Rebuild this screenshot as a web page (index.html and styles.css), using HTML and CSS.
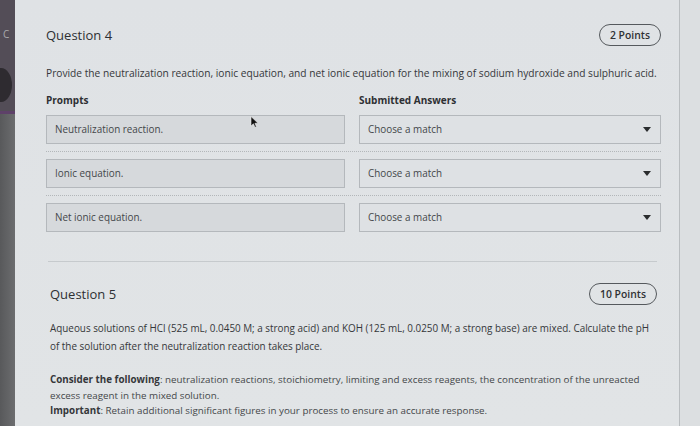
FILE: index.html
```html
<!DOCTYPE html>
<html>
<head>
<meta charset="utf-8">
<link rel="stylesheet" href="styles.css">
</head>
<body>
<div class="screen">
  <div class="sidebar">
    <div class="side-top">
      <span class="side-c">C</span>
      <span class="side-blob"></span>
    </div>
    <div class="side-bottom"></div>
  </div>
  <div class="main">
    <section class="q4">
      <div class="q-head">
        <h2 class="q-title">Question 4</h2>
        <span class="points">2 Points</span>
      </div>
      <p class="instr">Provide the neutralization reaction, ionic equation, and net ionic equation for the mixing of sodium hydroxide and sulphuric acid.</p>
      <div class="cols-head">
        <span class="col-l">Prompts</span>
        <span class="col-r">Submitted Answers</span>
      </div>
      <div class="row">
        <div class="prompt">Neutralization reaction.</div>
        <div class="select">Choose a match<span class="caret"></span></div>
      </div>
      <div class="sep"></div>
      <div class="row">
        <div class="prompt">Ionic equation.</div>
        <div class="select">Choose a match<span class="caret"></span></div>
      </div>
      <div class="sep"></div>
      <div class="row">
        <div class="prompt">Net ionic equation.</div>
        <div class="select">Choose a match<span class="caret"></span></div>
      </div>
      <svg class="cursor" width="9" height="12" viewBox="0 0 9 12"><path d="M1 0.5 L1 10 L3.4 7.8 L5 11.3 L6.4 10.7 L4.9 7.3 L8 7.2 Z" fill="#111" stroke="#eee" stroke-width="0.6"/></svg>
    </section>
    <div class="divider"></div>
    <section class="q5">
      <div class="q-head">
        <h2 class="q-title">Question 5</h2>
        <span class="points">10 Points</span>
      </div>
      <p class="body1">Aqueous solutions of HCl (525 mL, 0.0450 M; a strong acid) and KOH (125 mL, 0.0250 M; a strong base) are mixed. Calculate the pH of the solution after the neutralization reaction takes place.</p>
      <p class="body2"><span class="line"><b>Consider the following</b>: neutralization reactions, stoichiometry, limiting and excess reagents, the concentration of the unreacted excess reagent in the mixed solution.</span><span class="line"><b>Important</b>: Retain additional significant figures in your process to ensure an accurate response.</span></p>
    </section>
  </div>
  <div class="rightpane"></div>
</div>
</body>
</html>
```

FILE: styles.css
```css
* { box-sizing: border-box; }
html, body { margin: 0; padding: 0; }
body {
  width: 700px;
  height: 426px;
  overflow: hidden;
  font-family: "Open Sans", "Noto Sans", sans-serif;
  color: #3b3d40;
  background: #dde0e3;
}
.screen {
  display: flex;
  width: 700px;
  height: 426px;
}
.sidebar {
  width: 15px;
  flex: none;
  display: flex;
  flex-direction: column;
}
.side-top {
  height: 114px;
  background: #534d57;
  border-bottom: 3px solid #5e4169;
  position: relative;
  overflow: hidden;
}
.side-c {
  position: absolute;
  left: 3px;
  top: 27px;
  font-size: 10px;
  color: #a9a9ad;
}
.side-blob {
  position: absolute;
  left: -10px;
  top: 68px;
  width: 22px;
  height: 34px;
  border-radius: 50%;
  background: #2e2b30;
}
.side-bottom {
  flex: 1;
  background: linear-gradient(90deg, #58595b, #6c6d6f);
}
.main {
  width: 665px;
  flex: none;
  padding: 23px 18px 0 31px;
  background: linear-gradient(180deg, #dfe2e5, #e1e4e6);
  border-right: 1px solid #b9bdc0;
}
.rightpane {
  flex: 1;
  background: #dcdfe1;
}
.q4 { position: relative; }
.q-head {
  display: flex;
  justify-content: space-between;
  align-items: center;
  height: 24px;
}
.q-title {
  margin: 0;
  font-size: 13px;
  font-weight: 400;
  color: #2e3033;
}
.points {
  display: inline-block;
  height: 22px;
  line-height: 20px;
  padding: 0 10px;
  border: 1.3px solid #55595d;
  border-radius: 11px;
  font-size: 10.4px;
  font-weight: 600;
  color: #2f3134;
}
.instr {
  margin: 19px 0 0 0;
  font-size: 10.2px;
  line-height: 14px;
  color: #35373a;
  white-space: nowrap;
}
.cols-head {
  display: flex;
  margin-top: 13px;
  font-size: 10px;
  font-weight: 700;
  color: #2e3033;
  line-height: 14px;
}
.col-l { width: 313px; }
.row {
  display: flex;
  gap: 14px;
}
.cols-head + .row { margin-top: 8px; }
.prompt, .select {
  height: 29px;
  line-height: 27px;
  border: 1px solid #b4b8bc;
  font-size: 9.9px;
  color: #44474a;
  padding-left: 8px;
}
.prompt {
  width: 299px;
  background: #d6d9dc;
}
.select {
  width: 302px;
  background: #dee1e4;
  position: relative;
}
.caret {
  position: absolute;
  right: 9px;
  top: 11px;
  width: 0;
  height: 0;
  border-left: 4px solid transparent;
  border-right: 4px solid transparent;
  border-top: 5px solid #2a2c2e;
}
.sep {
  height: 15px;
  position: relative;
}
.sep::after {
  content: "";
  position: absolute;
  left: 0;
  right: 0;
  top: 7px;
  border-top: 1px dotted #b3b7ba;
}
.cursor {
  position: absolute;
  left: 204px;
  top: 93px;
}
.divider {
  margin: 29px 4px 0 2px;
  border-top: 1px solid #c6cacd;
}
.q5 {
  padding-left: 4px;
  padding-right: 2px;
  margin-top: 20px;
}
.q5 .q-head { padding-right: 2px; }
.body1 {
  margin: 13px 0 0 0;
  font-size: 9.9px;
  line-height: 18px;
  color: #35373a;
}
.body2 {
  margin: 17px 0 0 0;
  font-size: 9.8px;
  color: #44474a;
  display: flex;
  flex-direction: column;
}
.body2 .line { display: block; line-height: 15.5px; }
.body2 b { color: #35373a; font-weight: 700; }
```
